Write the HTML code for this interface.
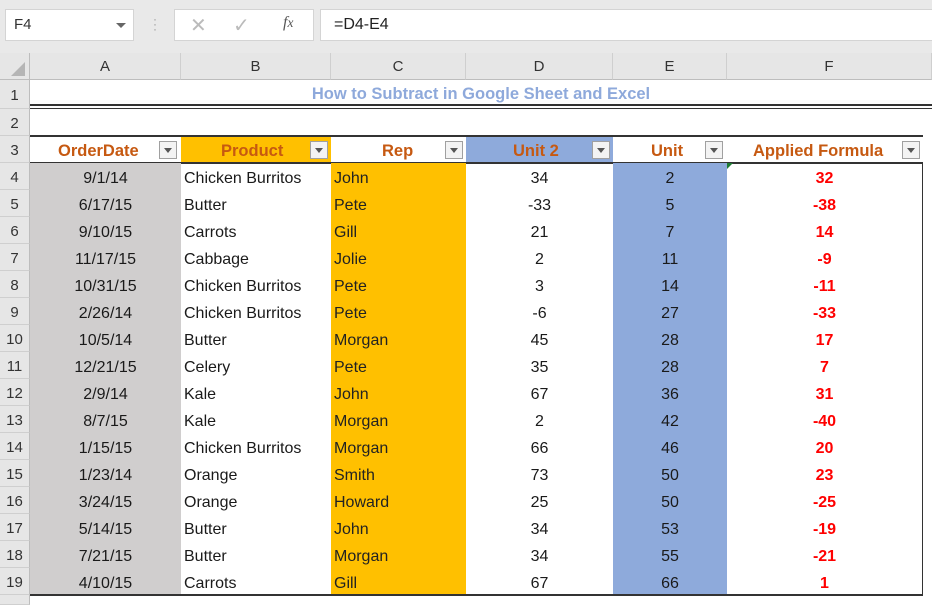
<!DOCTYPE html>
<html><head><meta charset="utf-8"><style>
*{margin:0;padding:0;box-sizing:border-box}
body{width:932px;height:604px;background:#fff;position:relative;overflow:hidden;font-family:"Liberation Sans",sans-serif;color:#1a1a1a}
.a{position:absolute}
.top{left:0;top:0;width:932px;height:53px;background:#e9e9e9}
.box{background:#fff;border:1px solid #d4d4d4;height:32px;top:9px}
.colh{top:53px;height:27px;background:#e6e6e6;border-right:1px solid #cfcfcf;border-bottom:1px solid #bdbdbd;text-align:center;font-size:15px;line-height:27px;color:#333}
.rowh{left:0;width:30px;background:#e6e6e6;border-bottom:1px solid #cfcfcf;border-right:1px solid #bdbdbd;text-align:center;font-size:15px;color:#333}
.hd{font-weight:bold;color:#c65911;font-size:16.5px;line-height:27px}
.dd{width:18px;height:18px;border:1px solid #a0a0a0;background:#f3f3f3;top:141px}
.dd:after{content:"";position:absolute;left:4px;top:6px;border-left:4px solid transparent;border-right:4px solid transparent;border-top:5px solid #555}
.row{position:relative;height:27px}.row>div{position:absolute;top:0;height:27px;line-height:31px;white-space:nowrap}
.row>.n{left:0;width:30px;background:#e6e6e6;border-bottom:1px solid #cfcfcf;border-right:1px solid #bdbdbd;text-align:center;font-size:15px;color:#333;line-height:29px}
.ca{left:30px;width:151px;text-align:center}.cb{left:184px}.cc{left:334px;color:#222}.cd{left:466px;width:147px;text-align:center}.ce{left:613px;width:114px;text-align:center}.cf{left:727px;width:195px;text-align:center;color:#f00;font-weight:bold}
</style></head><body>
<div class="a top"></div>
<div class="a box" style="left:5px;width:129px"><span class="a" style="left:8px;top:6px;font-size:15px;color:#333">F4</span><span class="a" style="left:110px;top:13px;border-left:5px solid transparent;border-right:5px solid transparent;border-top:5px solid #666"></span></div>
<div class="a" style="left:153px;top:17px;color:#999;font-size:12px;line-height:5px">·<br>·<br>·</div>
<div class="a box" style="left:174px;width:140px"><span class="a" style="left:15px;top:3px;font-size:20px;color:#bbb">✕</span><span class="a" style="left:58px;top:3px;font-size:20px;color:#bbb">✓</span><span class="a" style="left:108px;top:4px;font-size:16px;font-style:italic;font-family:'Liberation Serif',serif;color:#555">f<small>x</small></span></div>
<div class="a box" style="left:320px;width:620px"><span class="a" style="left:13px;top:6px;font-size:16px;color:#222">=D4-E4</span></div>

<div class="a" style="left:0;top:53px;width:30px;height:27px;background:#e6e6e6;border-right:1px solid #bdbdbd;border-bottom:1px solid #bdbdbd"><span class="a" style="left:11px;top:9px;border-left:14px solid transparent;border-bottom:14px solid #b5b5b5"></span></div>
<div class="a colh" style="left:30px;width:151px">A</div>
<div class="a colh" style="left:181px;width:150px">B</div>
<div class="a colh" style="left:331px;width:135px">C</div>
<div class="a colh" style="left:466px;width:147px">D</div>
<div class="a colh" style="left:613px;width:114px">E</div>
<div class="a colh" style="left:727px;width:205px">F</div>

<div class="a rowh" style="top:80px;height:29px;line-height:31px">1</div>
<div class="a rowh" style="top:109px;height:27px;line-height:30px">2</div>
<div class="a rowh" style="top:136px;height:27px;line-height:30px">3</div>

<div class="a" style="left:30px;top:85px;width:902px;text-align:center;font-weight:bold;color:#8ea9db;font-size:16.5px">How to Subtract in Google Sheet and Excel</div>
<div class="a" style="left:30px;top:104px;width:902px;height:5px;border-top:2px solid #333;border-bottom:1px solid #333"></div>

<div class="a" style="left:30px;top:135px;width:893px;height:29px;border-top:2px solid #333;border-bottom:2px solid #333"></div>
<div class="a" style="left:181px;top:137px;width:150px;height:25px;background:#ffc000"></div>
<div class="a" style="left:466px;top:137px;width:147px;height:25px;background:#8eaadb"></div>
<div class="a hd" style="left:58px;top:138px">OrderDate</div><div class="a dd" style="left:159px"></div>
<div class="a hd" style="left:221px;top:138px">Product</div><div class="a dd" style="left:310px"></div>
<div class="a hd" style="left:382px;top:138px">Rep</div><div class="a dd" style="left:445px"></div>
<div class="a hd" style="left:513px;top:138px">Unit 2</div><div class="a dd" style="left:592px"></div>
<div class="a hd" style="left:651px;top:138px">Unit</div><div class="a dd" style="left:705px"></div>
<div class="a hd" style="left:753px;top:138px">Applied Formula</div><div class="a dd" style="left:902px"></div>

<div class="a" style="left:30px;top:163px;width:151px;height:432px;background:#d0cece"></div>
<div class="a" style="left:331px;top:163px;width:135px;height:432px;background:#ffc000"></div>
<div class="a" style="left:613px;top:163px;width:114px;height:432px;background:#8eaadb"></div>
<div class="a" style="left:922px;top:163px;width:1px;height:432px;background:#333"></div>
<div class="a" style="left:30px;top:594px;width:893px;height:2px;background:#333"></div>
<div class="a" style="left:727px;top:163px;border-top:6px solid #1e7b34;border-right:6px solid transparent"></div>

<div class="a" style="left:0;top:163px;width:932px;font-size:16px">
<div class="row"><div class="n">4</div><div class="ca">9/1/14</div><div class="cb">Chicken Burritos</div><div class="cc">John</div><div class="cd">34</div><div class="ce">2</div><div class="cf">32</div></div>
<div class="row"><div class="n">5</div><div class="ca">6/17/15</div><div class="cb">Butter</div><div class="cc">Pete</div><div class="cd">-33</div><div class="ce">5</div><div class="cf">-38</div></div>
<div class="row"><div class="n">6</div><div class="ca">9/10/15</div><div class="cb">Carrots</div><div class="cc">Gill</div><div class="cd">21</div><div class="ce">7</div><div class="cf">14</div></div>
<div class="row"><div class="n">7</div><div class="ca">11/17/15</div><div class="cb">Cabbage</div><div class="cc">Jolie</div><div class="cd">2</div><div class="ce">11</div><div class="cf">-9</div></div>
<div class="row"><div class="n">8</div><div class="ca">10/31/15</div><div class="cb">Chicken Burritos</div><div class="cc">Pete</div><div class="cd">3</div><div class="ce">14</div><div class="cf">-11</div></div>
<div class="row"><div class="n">9</div><div class="ca">2/26/14</div><div class="cb">Chicken Burritos</div><div class="cc">Pete</div><div class="cd">-6</div><div class="ce">27</div><div class="cf">-33</div></div>
<div class="row"><div class="n">10</div><div class="ca">10/5/14</div><div class="cb">Butter</div><div class="cc">Morgan</div><div class="cd">45</div><div class="ce">28</div><div class="cf">17</div></div>
<div class="row"><div class="n">11</div><div class="ca">12/21/15</div><div class="cb">Celery</div><div class="cc">Pete</div><div class="cd">35</div><div class="ce">28</div><div class="cf">7</div></div>
<div class="row"><div class="n">12</div><div class="ca">2/9/14</div><div class="cb">Kale</div><div class="cc">John</div><div class="cd">67</div><div class="ce">36</div><div class="cf">31</div></div>
<div class="row"><div class="n">13</div><div class="ca">8/7/15</div><div class="cb">Kale</div><div class="cc">Morgan</div><div class="cd">2</div><div class="ce">42</div><div class="cf">-40</div></div>
<div class="row"><div class="n">14</div><div class="ca">1/15/15</div><div class="cb">Chicken Burritos</div><div class="cc">Morgan</div><div class="cd">66</div><div class="ce">46</div><div class="cf">20</div></div>
<div class="row"><div class="n">15</div><div class="ca">1/23/14</div><div class="cb">Orange</div><div class="cc">Smith</div><div class="cd">73</div><div class="ce">50</div><div class="cf">23</div></div>
<div class="row"><div class="n">16</div><div class="ca">3/24/15</div><div class="cb">Orange</div><div class="cc">Howard</div><div class="cd">25</div><div class="ce">50</div><div class="cf">-25</div></div>
<div class="row"><div class="n">17</div><div class="ca">5/14/15</div><div class="cb">Butter</div><div class="cc">John</div><div class="cd">34</div><div class="ce">53</div><div class="cf">-19</div></div>
<div class="row"><div class="n">18</div><div class="ca">7/21/15</div><div class="cb">Butter</div><div class="cc">Morgan</div><div class="cd">34</div><div class="ce">55</div><div class="cf">-21</div></div>
<div class="row"><div class="n">19</div><div class="ca">4/10/15</div><div class="cb">Carrots</div><div class="cc">Gill</div><div class="cd">67</div><div class="ce">66</div><div class="cf">1</div></div>
<div class="row" style="height:10px"><div class="n" style="height:10px"></div></div>
</div>
</body></html>
